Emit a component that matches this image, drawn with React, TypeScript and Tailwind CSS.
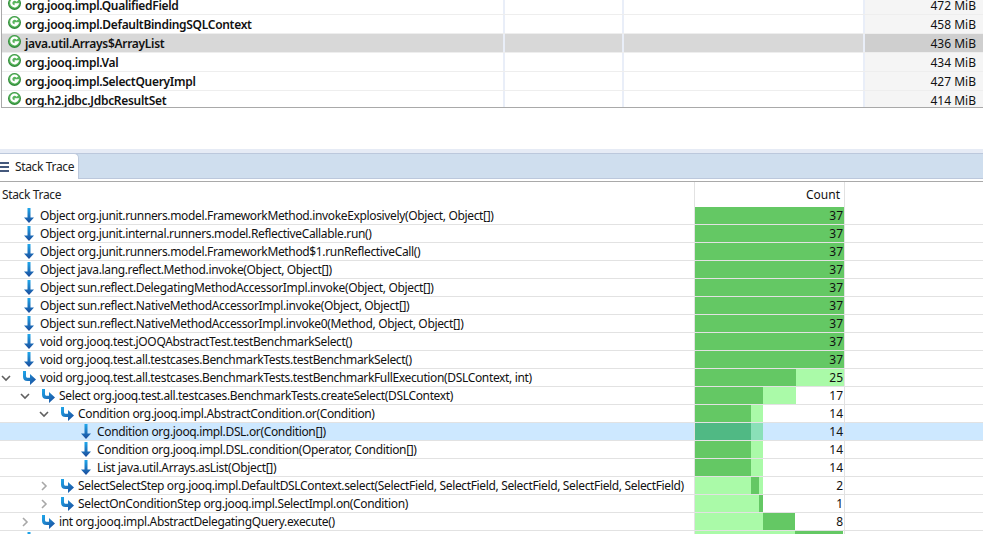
import React from "react";

const DARK = "bg-[#64c864]";
const LIGHT = "bg-[#aafaa8]";

type Kind = "down" | "hook";
type Seg = [boolean, number];
type Row = {
  level: number;
  kind: Kind;
  text: string;
  count: number;
  open?: boolean;
  closed?: boolean;
  selected?: boolean;
  segs: Seg[];
};

const full: Seg[] = [[true, 149]];
const cond: Seg[] = [[true, 56], [false, 12]];

const rows: Row[] = [
  { level: 0, kind: "down", text: "Object org.junit.runners.model.FrameworkMethod.invokeExplosively(Object, Object[])", count: 37, segs: full },
  { level: 0, kind: "down", text: "Object org.junit.internal.runners.model.ReflectiveCallable.run()", count: 37, segs: full },
  { level: 0, kind: "down", text: "Object org.junit.runners.model.FrameworkMethod$1.runReflectiveCall()", count: 37, segs: full },
  { level: 0, kind: "down", text: "Object java.lang.reflect.Method.invoke(Object, Object[])", count: 37, segs: full },
  { level: 0, kind: "down", text: "Object sun.reflect.DelegatingMethodAccessorImpl.invoke(Object, Object[])", count: 37, segs: full },
  { level: 0, kind: "down", text: "Object sun.reflect.NativeMethodAccessorImpl.invoke(Object, Object[])", count: 37, segs: full },
  { level: 0, kind: "down", text: "Object sun.reflect.NativeMethodAccessorImpl.invoke0(Method, Object, Object[])", count: 37, segs: full },
  { level: 0, kind: "down", text: "void org.jooq.test.jOOQAbstractTest.testBenchmarkSelect()", count: 37, segs: full },
  { level: 0, kind: "down", text: "void org.jooq.test.all.testcases.BenchmarkTests.testBenchmarkSelect()", count: 37, segs: full },
  { level: 0, kind: "hook", open: true, text: "void org.jooq.test.all.testcases.BenchmarkTests.testBenchmarkFullExecution(DSLContext, int)", count: 25, segs: [[true, 101], [false, 48]] },
  { level: 1, kind: "hook", open: true, text: "Select org.jooq.test.all.testcases.BenchmarkTests.createSelect(DSLContext)", count: 17, segs: [[true, 68], [false, 33]] },
  { level: 2, kind: "hook", open: true, text: "Condition org.jooq.impl.AbstractCondition.or(Condition)", count: 14, segs: cond },
  { level: 3, kind: "down", selected: true, text: "Condition org.jooq.impl.DSL.or(Condition[])", count: 14, segs: cond },
  { level: 3, kind: "down", text: "Condition org.jooq.impl.DSL.condition(Operator, Condition[])", count: 14, segs: cond },
  { level: 3, kind: "down", text: "List java.util.Arrays.asList(Object[])", count: 14, segs: cond },
  { level: 2, kind: "hook", closed: true, text: "SelectSelectStep org.jooq.impl.DefaultDSLContext.select(SelectField, SelectField, SelectField, SelectField, SelectField)", count: 2, segs: [[false, 56], [true, 8], [false, 4]] },
  { level: 2, kind: "hook", closed: true, text: "SelectOnConditionStep org.jooq.impl.SelectImpl.on(Condition)", count: 1, segs: [[false, 64], [true, 4]] },
  { level: 1, kind: "hook", closed: true, text: "int org.jooq.impl.AbstractDelegatingQuery.execute()", count: 8, segs: [[false, 68], [true, 32]] },
  { level: 0, kind: "down", text: "", count: 0, segs: [[false, 100], [true, 48]] },
];

const classes = [
  { name: "org.jooq.impl.QualifiedField", size: "472 MiB" },
  { name: "org.jooq.impl.DefaultBindingSQLContext", size: "458 MiB" },
  { name: "java.util.Arrays$ArrayList", size: "436 MiB", selected: true },
  { name: "org.jooq.impl.Val", size: "434 MiB" },
  { name: "org.jooq.impl.SelectQueryImpl", size: "427 MiB" },
  { name: "org.h2.jdbc.JdbcResultSet", size: "414 MiB" },
];

function ClassIcon() {
  return (
    <svg width="13" height="13" viewBox="0 0 13 13" className="shrink-0 mt-[-3px]">
      <circle cx="6.5" cy="6.500" r="6.500" fill="#2f8a38" />
      <circle cx="6.5" cy="6" r="5.600" fill="#58b45c" />
      <path d="M9.300 4.100A3.300 3.300 0 1 0 9.600 7.300H6.600" fill="none" stroke="#fff" strokeWidth="2.200" />
    </svg>
  );
}

function DownArrow() {
  return (
    <svg width="10" height="15" viewBox="0 0 10 15" className="shrink-0 ml-[5px]">
      <defs>
        <linearGradient id="down" x1="0" y1="0" x2="0" y2="1">
          <stop offset="0" stopColor="#1fa8ec" />
          <stop offset="1" stopColor="#1b4a9a" />
        </linearGradient>
      </defs>
      <path d="M3.500 0h3v9.500H10L5 15 0 9.500h3.500z" fill="url(#down)" />
    </svg>
  );
}

function HookArrow() {
  return (
    <svg width="13" height="14" viewBox="0 0 13 14" className="shrink-0 ml-[4px]">
      <defs>
        <linearGradient id="hook" x1="0" y1="0" x2="1" y2="1">
          <stop offset="0" stopColor="#1fa8ec" />
          <stop offset="1" stopColor="#1b4a9a" />
        </linearGradient>
      </defs>
      <path d="M0 0h3v5c0 1.200.6 1.800 1.800 1.800H7V3l6 5.400-6 5.600v-4H4.300C1.600 10 0 8.400 0 5.700z" fill="url(#hook)" />
    </svg>
  );
}

function Chevron({ open }: { open?: boolean }) {
  return (
    <svg width="10" height="10" viewBox="0 0 10 10" className="shrink-0 ml-[1px]">
      {open ? (
        <path d="M1 3l4 4 4-4" fill="none" stroke="#606060" strokeWidth="1.600" />
      ) : (
        <path d="M3 1l4 4-4 4" fill="none" stroke="#a8a8a8" strokeWidth="1.600" />
      )}
    </svg>
  );
}

function Bar({ row }: { row: Row }) {
  const selected = row.selected;
  return (
    <div className="relative w-[151px] h-full border-x border-[#e2e2e2] shrink-0">
      <div className="flex h-full">
        {row.segs.map(([dark, width], i) => (
          <div
            key={i}
            style={{ width }}
            className={selected ? (dark ? "bg-[#50b984]" : "bg-[#8ae0b8]") : dark ? DARK : LIGHT}
          />
        ))}
      </div>
      {row.text && (
        <span className="absolute right-[1px] top-0 leading-[17px] text-[#111]">{row.count}</span>
      )}
    </div>
  );
}

export default function App() {
  return (
    <div className="w-[983px] h-[534px] overflow-hidden bg-white text-[12px] text-[#111] font-['Noto_Sans','Open_Sans',sans-serif]">
      {/* allocation table, scrolled so the first row is cut off */}
      <div className="ml-[1px] h-[108px] border-l border-b border-[#a9a9a9] overflow-hidden">
        <div className="mt-[-4px]">
          {classes.map((c) => (
            <div
              key={c.name}
              className={`flex h-[19px] border-b border-[#eeeeee] ${c.selected ? "bg-[#d8d8d8]" : ""}`}
            >
              <div className="w-[501px] flex items-center pl-[6px] gap-[4px] font-semibold leading-[18px] tracking-[-0.3px]">
                <ClassIcon />
                <span className="pt-[2px]">{c.name}</span>
              </div>
              <div className="w-[119px] border-l-2 border-[#e9eef8]" />
              <div className="w-[241px] border-l-2 border-[#e9eef8]" />
              <div
                className={`flex-1 border-l-2 border-[#e9eef8] text-right pr-[7px] leading-[19px] ${c.selected ? "bg-[#cfcfcf]" : "bg-[#f5f5f5]"}`}
              >
                {c.size}
              </div>
            </div>
          ))}
        </div>
      </div>

      {/* view tab strip */}
      <div className="mt-[41px] h-[4px] bg-[#e6ebf5]" />
      <div className="h-[26px] flex bg-[#cfdeee] border-y border-[#bcc8dc]">
        <div className="w-[79px] h-[26px] bg-white rounded-tr-[5px] border-r border-t border-[#bcc8dc] mt-[-1px] flex items-center gap-[5px] whitespace-nowrap">
          <svg width="10" height="10" viewBox="0 0 10 10" className="shrink-0">
            <path d="M0 1h9M0 5h9M0 9h9" stroke="#44587c" strokeWidth="1.800" />
          </svg>
          <span className="text-[#222] tracking-[-0.35px]">Stack Trace</span>
        </div>
      </div>
      <div className="h-[2px]" />

      {/* stack trace tree */}
      <div className="border-t border-[#a9a9a9]">
        <div className="flex h-[25px] items-center">
          <div className="w-[694px] pl-[2px] pt-[1px] text-[#222] tracking-[-0.35px]">Stack Trace</div>
          <div className="w-[151px] h-full border-x border-[#e2e2e2] text-right pr-[4px] leading-[26px]">Count</div>
        </div>
        {rows.map((row, i) => (
          <div
            key={i}
            className={`flex h-[18px] border-b border-[#e2e2e2] ${row.selected ? "bg-[#cde8ff]" : ""}`}
          >
            <div className="w-[694px] flex items-center whitespace-nowrap" style={{ paddingLeft: row.level * 19 }}>
              <div className="w-[19px] shrink-0">{row.open || row.closed ? <Chevron open={row.open} /> : null}</div>
              <div className="w-[21px] shrink-0 flex items-center">
                {row.kind === "down" ? <DownArrow /> : <HookArrow />}
              </div>
              <span className="leading-[17px] tracking-[-0.35px]">{row.text}</span>
            </div>
            <Bar row={row} />
          </div>
        ))}
      </div>
    </div>
  );
}
